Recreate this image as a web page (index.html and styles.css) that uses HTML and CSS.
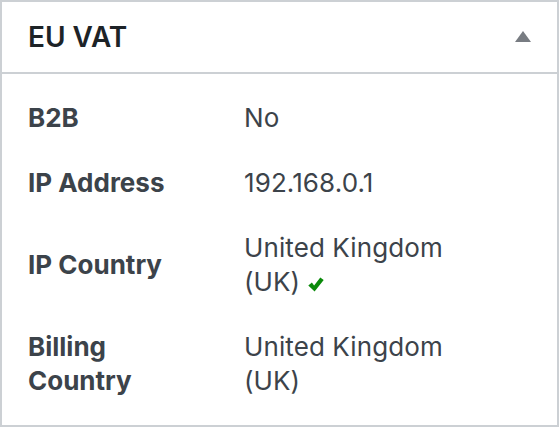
FILE: index.html
```html
<!DOCTYPE html>
<html lang="en">
<head>
  <meta charset="UTF-8" />
  <title>EU VAT</title>
  <link rel="stylesheet" href="styles.css">
</head>
<body>

  <div class="postbox">
    <div class="postbox-header">
      <h2>EU VAT</h2>
      <span class="toggle-arrow"></span>
    </div>

    <div class="vat-details">
      <div class="label">B2B</div>
      <div class="value">No</div>

      <div class="label">IP Address</div>
      <div class="value">192.168.0.1</div>

      <div class="label">IP Country</div>
      <div class="value">United Kingdom (UK)<svg class="valid" width="16" height="15" viewBox="0 0 16 15"><path d="M0.3 8.6 L3.9 5.6 L6.1 8.4 L12.3 0.4 L15.7 2.9 L6.6 14.6 Z" fill="#0a8a0a"/></svg></div>

      <div class="label">Billing Country</div>
      <div class="value">United Kingdom (UK)</div>
    </div>
  </div>

</body>
</html>
```

FILE: styles.css
```css
body {
  margin: 0;
  background: #fff;
  font-family: Inter, "Noto Sans", sans-serif;
  color: #3c434a;
}

.postbox {
  box-sizing: border-box;
  width: 559px;
  height: 427px;
  border: 2px solid #ccd0d4;
  background: #fff;
}

.postbox-header {
  display: flex;
  align-items: center;
  justify-content: space-between;
  height: 70px;
  padding: 0 26px;
  border-bottom: 2px solid #ccd0d4;
}

.postbox-header h2 {
  margin: 0;
  font-size: 28px;
  font-weight: 600;
  color: #1d2327;
}

.toggle-arrow {
  width: 0;
  height: 0;
  border-left: 8px solid transparent;
  border-right: 8px solid transparent;
  border-bottom: 11px solid #787c82;
  margin-top: -2px;
}

.vat-details {
  display: grid;
  grid-template-columns: 216px 1fr;
  align-items: center;
  padding: 11px 26px 0;
  font-size: 26px;
  line-height: 34px;
}

.vat-details .label,
.vat-details .value {
  padding: 15.5px 0;
}

.vat-details .label {
  font-weight: 700;
  padding-right: 50px;
}

.vat-details .value {
  padding-right: 40px;
  letter-spacing: 0.1px;
}

.valid {
  margin-left: 8px;
  vertical-align: -1px;
}
```
